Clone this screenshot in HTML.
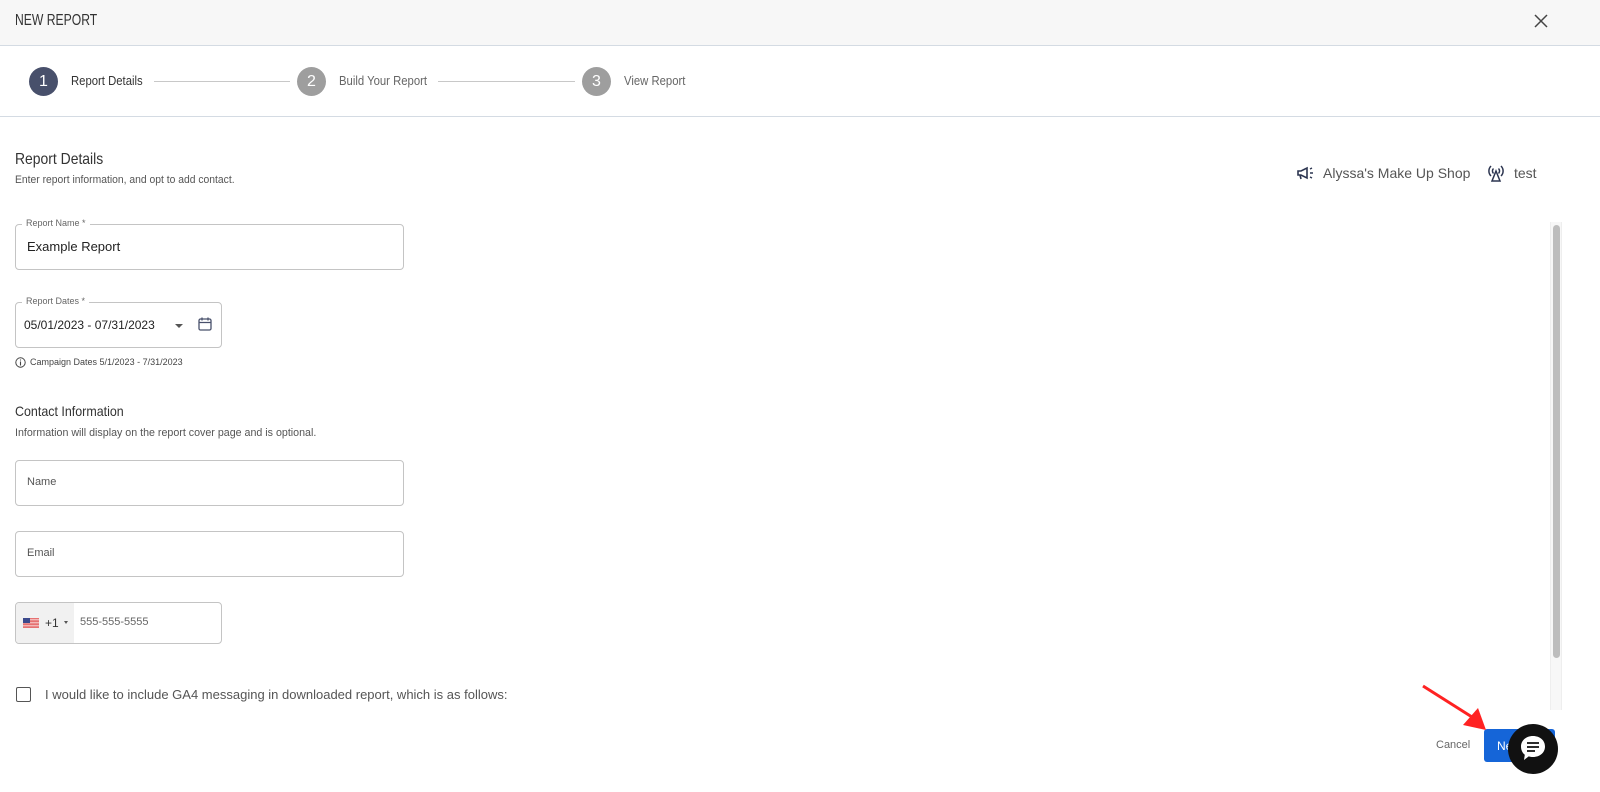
<!DOCTYPE html>
<html><head><meta charset="utf-8"><style>
*{box-sizing:border-box;margin:0;padding:0}
body{width:1600px;height:792px;background:#fff;font-family:"Liberation Sans",sans-serif;color:#333;position:relative;overflow:hidden}
.abs{position:absolute}
.cond{font-family:"Liberation Sans Narrow","Liberation Sans",sans-serif;transform-origin:left center;white-space:nowrap}
.hdr{left:0;top:0;width:1600px;height:46px;background:#f7f7f7;border-bottom:1px solid #d4dbe3}
.step{width:29px;height:29px;border-radius:50%;color:#fff;font-size:16px;text-align:center;line-height:29px;top:67px}
.sl{top:73px;font-size:13px;color:#333;transform:scaleX(0.87)}
.line{top:81px;height:1px;background:#c8c8c8}
.field{border:1px solid #c4c4c4;border-radius:4px;background:#fff}
.lbl{font-size:9px;color:#666;background:#fff;padding:0 4px}
</style></head><body>
<div class="abs hdr"></div>
<div class="abs cond" style="left:15px;top:12px;font-size:16px;color:#333;transform:scaleX(0.76)">NEW REPORT</div>
<svg class="abs" style="left:1533px;top:13px" width="16" height="16" viewBox="0 0 16 16"><path d="M2 2L14 14M14 2L2 14" stroke="#444" stroke-width="1.5"/></svg>

<div class="abs step" style="left:29px;background:#48506b">1</div>
<div class="abs sl cond" style="left:71px">Report Details</div>
<div class="abs line" style="left:154px;width:136px"></div>
<div class="abs step" style="left:297px;background:#9e9e9e">2</div>
<div class="abs sl cond" style="left:339px;color:#666">Build Your Report</div>
<div class="abs line" style="left:438px;width:137px"></div>
<div class="abs step" style="left:582px;background:#9e9e9e">3</div>
<div class="abs sl cond" style="left:624px;color:#666">View Report</div>
<div class="abs" style="left:0;top:116px;width:1600px;height:1px;background:#d4dbe3"></div>

<div class="abs cond" style="left:15px;top:151px;font-size:16px;color:#333;transform:scaleX(0.87)">Report Details</div>
<div class="abs cond" style="left:15px;top:174px;font-size:11px;color:#555;transform:scaleX(0.94)">Enter report information, and opt to add contact.</div>

<svg class="abs" style="left:1296px;top:165px" width="18" height="16" viewBox="0 0 18 16"><path d="M2 6h3l6-3v10l-6-3H2z M4 10l1 4" fill="none" stroke="#2c3550" stroke-width="1.6"/><path d="M14 4l2-1M14 8h3M14 12l2 1" stroke="#2c3550" stroke-width="1.4"/></svg>
<div class="abs" style="left:1323px;top:165px;font-size:14px;color:#555">Alyssa's Make Up Shop</div>
<svg class="abs" style="left:1487px;top:163px" width="18" height="20" viewBox="0 0 18 20"><path d="M4 3a7 7 0 0 0 0 10M14 3a7 7 0 0 1 0 10M6.5 5.5a3.5 3.5 0 0 0 0 5M11.5 5.5a3.5 3.5 0 0 1 0 5" fill="none" stroke="#2c3550" stroke-width="1.5"/><path d="M9 8L5 18h8z" fill="none" stroke="#2c3550" stroke-width="1.5"/></svg>
<div class="abs" style="left:1514px;top:165px;font-size:14px;color:#555">test</div>

<div class="abs" style="left:1550px;top:222px;width:12px;height:488px;background:#f7f7f7;border-left:1px solid #eee;border-right:1px solid #eee"></div>
<div class="abs" style="left:1553px;top:225px;width:7px;height:433px;background:#bdbdbd;border-radius:4px"></div>

<div class="abs field" style="left:15px;top:224px;width:389px;height:46px"></div>
<div class="abs lbl" style="left:22px;top:218px">Report Name *</div>
<div class="abs" style="left:27px;top:239px;font-size:13px;color:#222">Example Report</div>

<div class="abs field" style="left:15px;top:302px;width:207px;height:46px"></div>
<div class="abs lbl" style="left:22px;top:296px">Report Dates *</div>
<div class="abs" style="left:24px;top:318px;font-size:12px;color:#222">05/01/2023 - 07/31/2023</div>
<div class="abs" style="left:175px;top:324px;width:0;height:0;border-left:4px solid transparent;border-right:4px solid transparent;border-top:4px solid #555"></div>
<svg class="abs" style="left:198px;top:317px" width="14" height="14" viewBox="0 0 14 14"><rect x="1" y="2" width="12" height="11" rx="1.5" fill="none" stroke="#48506b" stroke-width="1.3"/><path d="M1 5.5h12M4 0.5v3M10 0.5v3" stroke="#48506b" stroke-width="1.3"/></svg>
<svg class="abs" style="left:15px;top:357px" width="11" height="11" viewBox="0 0 11 11"><circle cx="5.5" cy="5.5" r="4.7" fill="none" stroke="#444" stroke-width="1"/><path d="M5.5 4.5v4M5.5 2.5v1" stroke="#444" stroke-width="1.1"/></svg>
<div class="abs" style="left:30px;top:357px;font-size:9px;color:#444">Campaign Dates 5/1/2023 - 7/31/2023</div>

<div class="abs cond" style="left:15px;top:403px;font-size:14px;color:#333;transform:scaleX(0.89)">Contact Information</div>
<div class="abs cond" style="left:15px;top:427px;font-size:11px;color:#555;transform:scaleX(0.97)">Information will display on the report cover page and is optional.</div>

<div class="abs field" style="left:15px;top:460px;width:389px;height:46px"></div>
<div class="abs" style="left:27px;top:476px;font-size:11px;color:#555">Name</div>
<div class="abs field" style="left:15px;top:531px;width:389px;height:46px"></div>
<div class="abs" style="left:27px;top:547px;font-size:11px;color:#555">Email</div>

<div class="abs field" style="left:15px;top:602px;width:207px;height:42px;overflow:hidden"><div style="width:58px;height:100%;background:#f1f1f1"></div></div>
<svg class="abs" style="left:23px;top:618px" width="16" height="10" viewBox="0 0 16 10"><rect width="16" height="10" fill="#fff"/><path d="M0 0.7h16M0 2.2h16M0 3.7h16M0 5.2h16M0 6.7h16M0 8.2h16M0 9.6h16" stroke="#d44" stroke-width="0.8"/><rect width="7" height="5" fill="#3c4a8c"/></svg>
<div class="abs" style="left:45px;top:616px;font-size:12px;color:#333">+1</div>
<div class="abs" style="left:64px;top:621px;width:0;height:0;border-left:2.5px solid transparent;border-right:2.5px solid transparent;border-top:3px solid #555"></div>
<div class="abs" style="left:80px;top:616px;font-size:11px;color:#666">555-555-5555</div>

<div class="abs" style="left:16px;top:687px;width:15px;height:15px;border:1.5px solid #555;border-radius:2px"></div>
<div class="abs" style="left:45px;top:687px;font-size:13px;color:#555">I would like to include GA4 messaging in downloaded report, which is as follows:</div>

<div class="abs" style="left:1436px;top:739px;font-size:11px;color:#666">Cancel</div>
<div class="abs" style="left:1484px;top:729px;width:71px;height:33px;background:#1565d8;border-radius:3px;color:#fff;font-size:12px;padding:10px 0 0 13px">Next</div>
<svg class="abs" style="left:1420px;top:683px" width="70" height="50" viewBox="0 0 70 50"><path d="M3 3L52 34" stroke="#f22" stroke-width="3"/><path d="M43 42L66 47L58 25z" fill="#f22"/></svg>
<div class="abs" style="left:1508px;top:724px;width:50px;height:50px;border-radius:50%;background:#111"></div>
<svg class="abs" style="left:1515px;top:730px" width="36" height="36" viewBox="0 0 36 36"><path d="M18 6c7 0 12 4.5 12 10.5S25 27 18 27c-1.5 0-3-.2-4.3-.6L9 30l.8-5.2C7.4 22.9 6 20 6 16.5 6 10.5 11 6 18 6z" fill="#fff"/><path d="M12 13h12M12 17h12M12 21h8" stroke="#111" stroke-width="1.8"/></svg>
</body></html>
